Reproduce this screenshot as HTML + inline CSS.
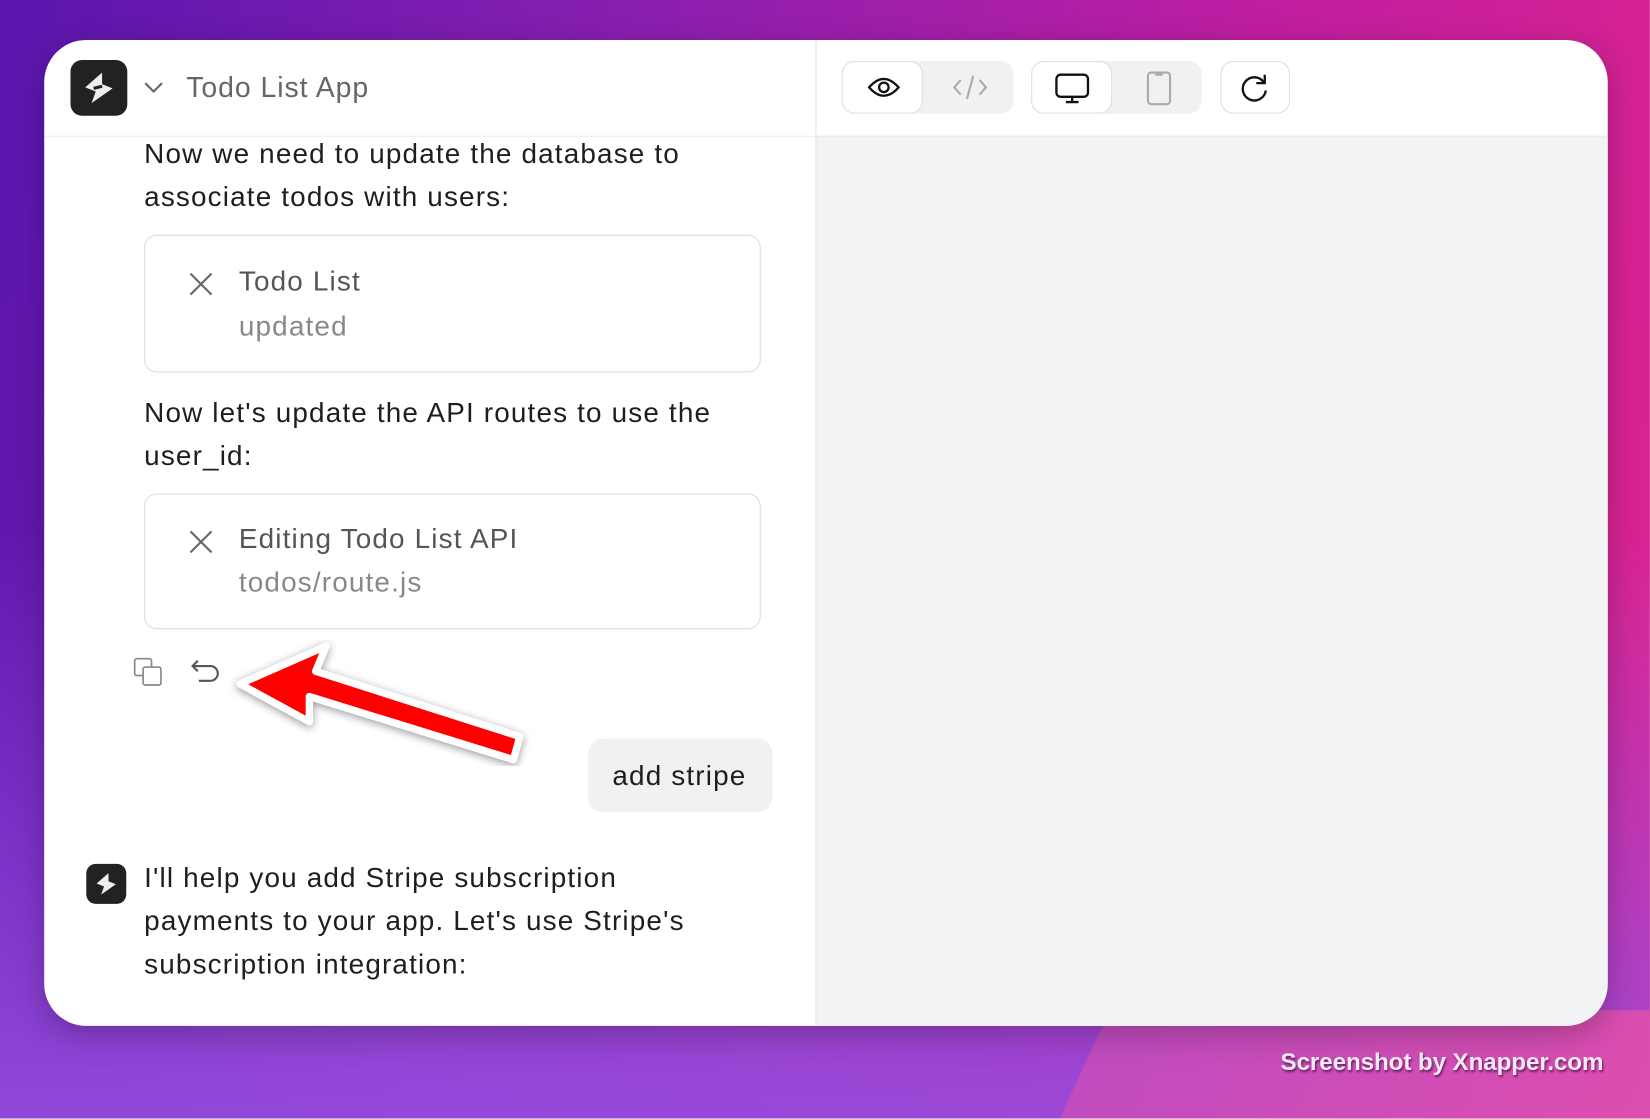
<!DOCTYPE html>
<html><head><meta charset="utf-8"><style>
html,body{margin:0;padding:0;width:1650px;height:1119px;overflow:hidden}
#w{position:absolute;left:0;top:0;width:1568px;height:1063px;transform:scale(1.0522);transform-origin:0 0;overflow:hidden;
background:linear-gradient(100deg,#5a16ae 0%,#8a1fb0 35%,#c11ea0 70%,#e0248e 100%);font-family:"Liberation Sans",sans-serif}
#bot{position:absolute;left:0;top:500px;width:1568px;height:563px;background:linear-gradient(180deg,rgba(140,80,230,0) 0%,rgba(150,80,225,.85) 100%)}
#shape{position:absolute;left:1055px;top:960px;width:900px;height:103px;background:linear-gradient(90deg,#c04cbf,#ee4fa5);transform:skewX(-25deg);transform-origin:0 0}
#win{position:absolute;left:42px;top:38px;width:1486px;height:937px;background:#fff;border-radius:40px;overflow:hidden;box-shadow:0 8px 30px rgba(0,0,0,.25)}
.t{position:absolute;font-size:26.5px;letter-spacing:1.1px;color:#1e1e1e;white-space:nowrap;line-height:41px}
.card{position:absolute;left:95px;width:584px;border:1.5px solid #dcdcdc;border-radius:12px;background:#fff}
.btn{position:absolute;background:#fff;border:1.5px solid #dedede;border-radius:12px;box-sizing:border-box}
.grp{position:absolute;background:#f1f1f2;border-radius:12px}
</style></head><body><div id="w">
<div id="bot"></div><div id="shape"></div>
<div id="win">
 <div style="position:absolute;left:733px;top:0;width:1px;height:937px;background:#e4e4e4"></div>
 <div style="position:absolute;left:0;top:91px;width:733px;height:1px;background:#ebebeb"></div>
 <div style="position:absolute;left:734px;top:91px;right:0;bottom:0;background:#f2f3f5;border-top:1px solid #ebebeb"></div>
 <div style="position:absolute;left:25px;top:19px;width:54px;height:53px;background:#222;border-radius:11px"></div>
 <svg style="position:absolute;left:25px;top:19px" width="54" height="53" viewBox="0 0 54 53"><path d="M30 12 L14 26 L24 30 L20 41 L40 27 L30 23 Z" fill="#eee"/><path d="M22 27 L30 25" stroke="#222" stroke-width="3"/></svg>
 <svg style="position:absolute;left:94px;top:38px" width="20" height="14"><path d="M2 3 L10 11 L18 3" fill="none" stroke="#666" stroke-width="2"/></svg>
 <div class="t" style="left:135px;top:25px;font-size:27px;color:#666;letter-spacing:0.9px">Todo List App</div>
 <div class="t" style="left:95px;top:88px">Now we need to update the database to</div>
 <div class="t" style="left:95px;top:129px">associate todos with users:</div>
 <div class="card" style="top:185px;height:129px">
  <svg style="position:absolute;left:40px;top:33px" width="26" height="26"><path d="M3 3L23 23M23 3L3 23" stroke="#666" stroke-width="2"/></svg>
  <div class="t" style="left:89px;top:23px;color:#555">Todo List</div>
  <div class="t" style="left:89px;top:66px;color:#888">updated</div>
 </div>
 <div class="t" style="left:95px;top:334px">Now let's update the API routes to use the</div>
 <div class="t" style="left:95px;top:375px">user_id:</div>
 <div class="card" style="top:431px;height:127px">
  <svg style="position:absolute;left:40px;top:32px" width="26" height="26"><path d="M3 3L23 23M23 3L3 23" stroke="#666" stroke-width="2"/></svg>
  <div class="t" style="left:89px;top:22px;color:#555">Editing Todo List API</div>
  <div class="t" style="left:89px;top:63px;color:#888">todos/route.js</div>
 </div>
 <svg style="position:absolute;left:84px;top:586px" width="30" height="30"><rect x="2" y="2" width="16" height="16" rx="2" fill="#fff" stroke="#888" stroke-width="1.6"/><rect x="10" y="10" width="17" height="17" rx="2" fill="#fff" stroke="#888" stroke-width="1.6"/></svg>
 <svg style="position:absolute;left:138px;top:586px" width="32" height="30"><path d="M8 4 L3 9 L8 14 M3 9 H20 A7 7 0 0 1 20 23 H9" fill="none" stroke="#555" stroke-width="2"/></svg>
 <svg style="position:absolute;left:170px;top:570px" width="300" height="120"><g style="filter:drop-shadow(0 2px 4px rgba(0,0,0,.4))"><path d="M16 52 L98 16 L88 40 L282 102 L276 124 L82 64 L82 88 Z" fill="#f00" stroke="#fff" stroke-width="7" stroke-linejoin="round" transform="translate(0,-10)"/></g></svg>
 <div style="position:absolute;left:517px;top:664px;width:175px;height:70px;background:#f1f1f1;border-radius:14px"></div>
 <div class="t" style="left:540px;top:679px">add stripe</div>
 <div style="position:absolute;left:40px;top:783px;width:38px;height:38px;background:#222;border-radius:9px"></div>
 <svg style="position:absolute;left:40px;top:783px" width="38" height="38" viewBox="0 0 54 53"><path d="M30 12 L14 26 L24 30 L20 41 L40 27 L30 23 Z" fill="#eee"/></svg>
 <div class="t" style="left:95px;top:776px">I'll help you add Stripe subscription</div>
 <div class="t" style="left:95px;top:817px">payments to your app. Let's use Stripe's</div>
 <div class="t" style="left:95px;top:858px">subscription integration:</div>
 <div class="grp" style="left:758px;top:20px;width:163px;height:50px"></div>
 <div class="btn" style="left:758px;top:20px;width:77px;height:50px"></div>
 <svg style="position:absolute;left:782px;top:32px" width="32" height="26"><path d="M2 13 Q16 -3 30 13 Q16 29 2 13Z" fill="none" stroke="#111" stroke-width="2.2"/><circle cx="16" cy="13" r="4.5" fill="none" stroke="#111" stroke-width="2.2"/></svg>
 <svg style="position:absolute;left:862px;top:31px" width="36" height="28"><path d="M9 7 L3 14 L9 21 M27 7 L33 14 L27 21 M21 3 L15 25" fill="none" stroke="#aaa" stroke-width="2"/></svg>
 <div class="grp" style="left:938px;top:20px;width:162px;height:50px"></div>
 <div class="btn" style="left:938px;top:20px;width:77px;height:50px"></div>
 <svg style="position:absolute;left:960px;top:31px" width="34" height="30"><rect x="2" y="2" width="30" height="21" rx="4" fill="none" stroke="#111" stroke-width="2.2"/><path d="M17 23 V28 M11 28 H23" stroke="#111" stroke-width="2.2"/></svg>
 <svg style="position:absolute;left:1047px;top:29px" width="26" height="34"><rect x="2" y="2" width="21" height="30" rx="3" fill="none" stroke="#aaa" stroke-width="2"/><path d="M9 4 H16" stroke="#aaa" stroke-width="2"/></svg>
 <div class="btn" style="left:1118px;top:20px;width:66px;height:50px"></div>
 <svg style="position:absolute;left:1134px;top:31px" width="32" height="30"><path d="M25 9 A11 11 0 1 0 27 17" fill="none" stroke="#111" stroke-width="2.2"/><path d="M26 2 V10 H18" fill="none" stroke="#111" stroke-width="2.2"/></svg>
</div>
<div style="position:absolute;left:1217px;top:996px;font-size:23px;font-weight:bold;color:#f4eaf4;text-shadow:1px 2px 2px rgba(60,0,60,.7);letter-spacing:-0.1px;white-space:nowrap">Screenshot by Xnapper.com</div>
</div></body></html>
